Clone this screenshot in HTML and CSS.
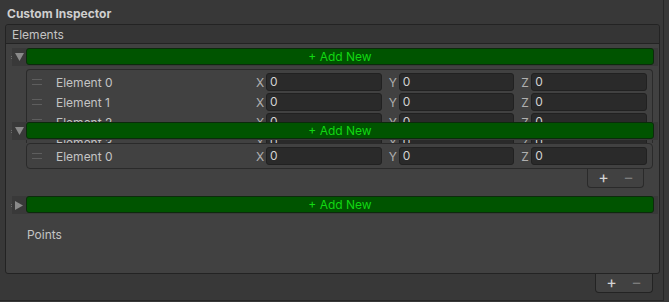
FILE: index.html
```html
<!DOCTYPE html>
<html lang="en">
<head>
  <meta charset="UTF-8">
  <title>Custom Inspector</title>
  <link rel="stylesheet" href="styles.css">
</head>
<body>
<div class="frame">
  <div class="title">Custom Inspector</div>

  <div class="list">
    <div class="list-head">Elements</div>
    <div class="list-body">

      <div class="strip">
        <span class="fold">
          <svg width="9" height="8" viewBox="0 0 9 8"><polygon points="0,0 9,0 4.5,8" fill="#8a8a8a"/></svg>
        </span>
        <div class="add">+ Add New</div>
      </div>

      <div class="sub">
        <div class="box box-cut">
          <div class="row">
            <span class="handle"></span>
            <span class="name">Element 0</span>
            <div class="vec">
              <label class="axis"><span>X</span><span class="field">0</span></label>
              <label class="axis"><span>Y</span><span class="field">0</span></label>
              <label class="axis"><span>Z</span><span class="field">0</span></label>
            </div>
          </div>
          <div class="row">
            <span class="handle"></span>
            <span class="name">Element 1</span>
            <div class="vec">
              <label class="axis"><span>X</span><span class="field">0</span></label>
              <label class="axis"><span>Y</span><span class="field">0</span></label>
              <label class="axis"><span>Z</span><span class="field">0</span></label>
            </div>
          </div>
          <div class="row">
            <span class="handle"></span>
            <span class="name">Element 2</span>
            <div class="vec">
              <label class="axis"><span>X</span><span class="field">0</span></label>
              <label class="axis"><span>Y</span><span class="field">0</span></label>
              <label class="axis"><span>Z</span><span class="field">0</span></label>
            </div>
          </div>
          <div class="row">
            <span class="handle"></span>
            <span class="name">Element 3</span>
            <div class="vec">
              <label class="axis"><span>X</span><span class="field">0</span></label>
              <label class="axis"><span>Y</span><span class="field">0</span></label>
              <label class="axis"><span>Z</span><span class="field">0</span></label>
            </div>
          </div>
        </div>

        <div class="box">
          <div class="row">
            <span class="handle"></span>
            <span class="name">Element 0</span>
            <div class="vec">
              <label class="axis"><span>X</span><span class="field">0</span></label>
              <label class="axis"><span>Y</span><span class="field">0</span></label>
              <label class="axis"><span>Z</span><span class="field">0</span></label>
            </div>
          </div>
        </div>
        <div class="foot foot-sub"><span>+</span><span class="minus">&minus;</span></div>
      </div>

      <!-- second element header, drawn over the first list -->
      <div class="strip strip-over">
        <span class="fold">
          <svg width="9" height="8" viewBox="0 0 9 8"><polygon points="0,0 9,0 4.5,8" fill="#8a8a8a"/></svg>
        </span>
        <div class="add">+ Add New</div>
      </div>

      <div class="strip strip-last">
        <span class="fold">
          <svg width="8" height="9" viewBox="0 0 8 9"><polygon points="0,0 8,4.5 0,9" fill="#8a8a8a"/></svg>
        </span>
        <div class="add">+ Add New</div>
      </div>

      <div class="points">Points</div>
    </div>
  </div>
  <div class="foot"><span>+</span><span class="minus">&minus;</span></div>
</div>
</body>
</html>
```

FILE: styles.css
```css
*{padding: 0; margin: 0; box-sizing: border-box;}
body{
  background: #383838;
  font-family: Inter, "Noto Sans", sans-serif;
  font-size: 12px;
  color: #c4c4c4;
}
.frame{
  width: 664px;
  height: 301px;
  border-right: 1px solid #262626;
  border-bottom: 1px solid #262626;
}
.title{
  height: 24px;
  padding: 6px 0 0 7px;
  line-height: 16px;
  font-weight: bold;
  color: #cfcfcf;
}
.list{
  margin-left: 5px;
  width: 655px;
  border: 1px solid #232323;
  border-radius: 3px;
}
.list-head{
  height: 19px;
  line-height: 19px;
  padding-left: 6px;
  background: #353535;
  border-bottom: 1px solid #232323;
  border-radius: 3px 3px 0 0;
}
.list-body{
  position: relative;
  background: #414141;
  padding: 4px 1px 30px 6px;
  border-radius: 0 0 3px 3px;
}
.strip{
  position: relative;
  display: flex;
  height: 18px;
  padding-right: 4px;
  background: #393939;
}
.strip::before{
  content: '';
  position: absolute;
  left: -1px;
  top: 8px;
  width: 1px;
  height: 1px;
  background: #6a6a6a;
  box-shadow: 0 2px 0 #6a6a6a;
}
.fold{
  display: flex;
  align-items: center;
  justify-content: center;
  width: 14px;
  flex-shrink: 0;
}
.add{
  flex: 1;
  height: 17px;
  line-height: 15px;
  text-align: center;
  background: #005400;
  border: 1px solid #0c2a0c;
  border-radius: 3px;
  color: #12d812;
}
.strip-over{
  position: absolute;
  top: 78px;
  left: 6px;
  right: 1px;
}
.strip-last{
  margin-top: 8px;
}
.sub{
  margin: 3px 5px 0 14px;
}
.box{
  background: #414141;
  border: 1px solid #2a2a2a;
  border-radius: 4px;
  padding: 2px 0;
}
.box-cut{
  height: 74px;
  overflow: hidden;
  border-bottom: none;
  border-radius: 4px 4px 0 0;
}
.row{
  display: flex;
  align-items: center;
  height: 20px;
  padding-right: 5px;
}
.handle{
  width: 10px;
  height: 6px;
  margin-left: 5px;
  border-top: 1px solid #5e5e5e;
  border-bottom: 1px solid #5e5e5e;
}
.name{
  width: 199px;
  margin-left: 14px;
  flex-shrink: 0;
}
.vec{
  flex: 1;
  display: flex;
  gap: 6px;
}
.axis{
  flex: 1;
  display: flex;
  align-items: center;
  color: #b0b0b0;
}
.axis span:first-child{
  width: 11px;
  padding-left: 1px;
  flex-shrink: 0;
}
.field{
  flex: 1;
  height: 18px;
  line-height: 16px;
  padding-left: 3px;
  background: #2a2a2a;
  border: 1px solid #212121;
  border-radius: 3px;
  color: #d2d2d2;
}
.foot{
  display: flex;
  width: 58px;
  height: 19px;
  margin: 0 10px 0 auto;
  padding-left: 3px;
  background: #414141;
  border: 1px solid #232323;
  border-top: none;
  border-radius: 0 0 4px 4px;
  font-size: 16px;
  line-height: 17px;
  color: #d4d4d4;
}
.foot-sub{
  width: 57px;
  margin-right: 9px;
  border-color: #2a2a2a;
}
.foot span{
  width: 25px;
  text-align: center;
}
.foot .minus{
  color: #7c7c7c;
}
.points{
  margin-top: 13px;
  padding-left: 15px;
  line-height: 16px;
}
```
